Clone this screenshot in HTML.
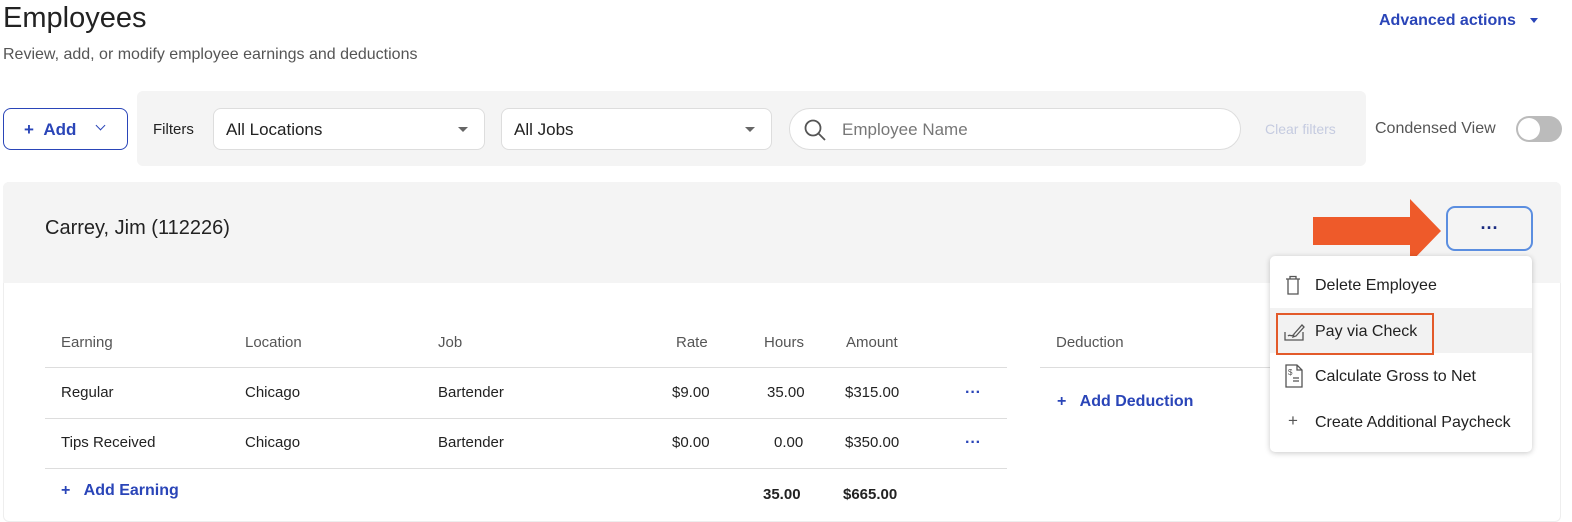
<!DOCTYPE html>
<html><head><style>
*{box-sizing:border-box;margin:0;padding:0}
body{width:1572px;height:512px;overflow:hidden;background:#fff;font-family:"Liberation Sans",sans-serif;color:#222;position:relative}
.a{position:absolute;white-space:nowrap}
.sel{position:absolute;background:#fff;border:1px solid #ddd;border-radius:8px;height:42px;top:108px;font-size:17px;padding:11px 12px}
.tri{position:absolute;right:16px;top:18px;width:0;height:0;border-left:5px solid transparent;border-right:5px solid transparent;border-top:5px solid #666}
.th{font-size:15px;color:#555;top:334px}
.td{font-size:15px;color:#222}
.blue{color:#2a45b8;font-weight:bold}
.dots{color:#2a45b8;font-weight:bold;font-size:16px}
</style></head><body>
<div class="a" style="left:3px;top:2px;font-size:29px;color:#222">Employees</div>
<div class="a" style="left:3px;top:46px;font-size:16px;color:#555">Review, add, or modify employee earnings and deductions</div>
<div class="a blue" style="left:1379px;top:12px;font-size:16px">Advanced actions</div>
<div class="a" style="left:1530px;top:18px;border-left:4px solid transparent;border-right:4px solid transparent;border-top:5px solid #2a45b8"></div>

<div class="a" style="left:3px;top:108px;width:125px;height:42px;border:1.5px solid #2a45b8;border-radius:8px"></div>
<div class="a blue" style="left:24px;top:120px;font-size:17px">+&nbsp;&nbsp;Add</div>
<div class="a" style="left:97px;top:122px;width:7px;height:7px;border-right:1.5px solid #2a45b8;border-bottom:1.5px solid #2a45b8;transform:rotate(45deg)"></div>

<div class="a" style="left:137px;top:91px;width:1229px;height:75px;background:#f4f4f4;border-radius:6px"></div>
<div class="a" style="left:153px;top:121px;font-size:15px">Filters</div>
<div class="sel" style="left:213px;width:272px">All Locations<div class="tri"></div></div>
<div class="sel" style="left:501px;width:271px">All Jobs<div class="tri"></div></div>
<div class="sel" style="left:789px;width:452px;border-radius:21px;color:#777;padding-left:52px">Employee Name</div>
<svg class="a" style="left:803px;top:118px" width="24" height="24" viewBox="0 0 24 24" fill="none" stroke="#555" stroke-width="1.8"><circle cx="10" cy="10" r="7.5"/><path d="M15.5 15.5L22 22"/></svg>
<div class="a" style="left:1265px;top:121px;font-size:14px;color:#c5cbe0">Clear filters</div>
<div class="a" style="left:1375px;top:120px;font-size:16px;color:#555">Condensed View</div>
<div class="a" style="left:1516px;top:116px;width:46px;height:26px;border-radius:13px;background:#bbb"></div>
<div class="a" style="left:1518px;top:118px;width:22px;height:22px;border-radius:11px;background:#fff"></div>

<div class="a" style="left:3px;top:182px;width:1558px;height:340px;border:1px solid #eee;border-radius:6px"></div>
<div class="a" style="left:3px;top:182px;width:1558px;height:101px;background:#f4f4f4;border-radius:6px 6px 0 0"></div>
<div class="a" style="left:45px;top:217px;font-size:20px">Carrey, Jim (112226)</div>

<svg class="a" style="left:1313px;top:199px" width="128" height="64"><polygon points="0,18 97,18 97,0 128,32 97,64 97,46 0,46" fill="#ee5a2a"/></svg>
<div class="a" style="left:1446px;top:206px;width:87px;height:45px;border:2px solid #5b8ee0;border-radius:9px;background:#f4f4f4;text-align:center;font-size:18px;color:#1a2b80;line-height:40px;font-weight:bold">···</div>

<div class="a th" style="left:61px">Earning</div>
<div class="a th" style="left:245px">Location</div>
<div class="a th" style="left:438px">Job</div>
<div class="a th" style="left:676px">Rate</div>
<div class="a th" style="left:764px">Hours</div>
<div class="a th" style="left:846px">Amount</div>
<div class="a th" style="left:1056px">Deduction</div>
<div class="a" style="left:45px;top:367px;width:962px;border-top:1px solid #ddd"></div>
<div class="a" style="left:45px;top:418px;width:962px;border-top:1px solid #ddd"></div>
<div class="a" style="left:45px;top:468px;width:962px;border-top:1px solid #ddd"></div>
<div class="a" style="left:1040px;top:367px;width:250px;border-top:1px solid #ddd"></div>

<div class="a td" style="left:61px;top:384px">Regular</div>
<div class="a td" style="left:245px;top:384px">Chicago</div>
<div class="a td" style="left:438px;top:384px">Bartender</div>
<div class="a td" style="left:672px;top:384px">$9.00</div>
<div class="a td" style="left:767px;top:384px">35.00</div>
<div class="a td" style="left:845px;top:384px">$315.00</div>
<div class="a dots" style="left:965px;top:384px">···</div>
<div class="a td" style="left:61px;top:434px">Tips Received</div>
<div class="a td" style="left:245px;top:434px">Chicago</div>
<div class="a td" style="left:438px;top:434px">Bartender</div>
<div class="a td" style="left:672px;top:434px">$0.00</div>
<div class="a td" style="left:774px;top:434px">0.00</div>
<div class="a td" style="left:845px;top:434px">$350.00</div>
<div class="a dots" style="left:965px;top:434px">···</div>
<div class="a blue" style="left:61px;top:482px;font-size:16px">+&nbsp;&nbsp;&nbsp;Add Earning</div>
<div class="a" style="left:763px;top:486px;font-size:15px;font-weight:bold">35.00</div>
<div class="a" style="left:843px;top:486px;font-size:15px;font-weight:bold">$665.00</div>
<div class="a blue" style="left:1057px;top:393px;font-size:16px">+&nbsp;&nbsp;&nbsp;Add Deduction</div>

<div class="a" style="left:1270px;top:256px;width:262px;height:196px;background:#fff;border-radius:5px;box-shadow:0 1px 6px rgba(0,0,0,.22)"></div>
<div class="a" style="left:1270px;top:308px;width:262px;height:45px;background:#f2f2f2"></div>
<svg class="a" style="left:1285px;top:275px" width="16" height="20" fill="none" stroke="#555" stroke-width="1.3"><path d="M1 4h14M5 4V1.5h6V4M3 4v15h10V4"/></svg>
<div class="a" style="left:1315px;top:277px;font-size:16px">Delete Employee</div>
<div class="a" style="left:1276px;top:313px;width:158px;height:42px;border:2.5px solid #e35a2a"></div>
<svg class="a" style="left:1284px;top:320px" width="22" height="22" fill="none" stroke="#555" stroke-width="1.3"><path d="M1 12v8h18v-8M4 16c2-2 3 1 5-1M10 14l8-9 2 2-8 9-3 1z"/></svg>
<div class="a" style="left:1315px;top:323px;font-size:16px">Pay via Check</div>
<svg class="a" style="left:1285px;top:364px" width="18" height="24" fill="none" stroke="#555" stroke-width="1.3"><path d="M1 1h11l5 5v17H1zM12 1v5h5M8 14h6M8 17h6"/><text x="3" y="11" font-size="8" fill="#555" stroke="none" font-family="Liberation Sans">$</text></svg>
<div class="a" style="left:1315px;top:368px;font-size:16px">Calculate Gross to Net</div>
<div class="a" style="left:1288px;top:411px;font-size:17px;color:#555">+</div>
<div class="a" style="left:1315px;top:414px;font-size:16px">Create Additional Paycheck</div>
</body></html>
